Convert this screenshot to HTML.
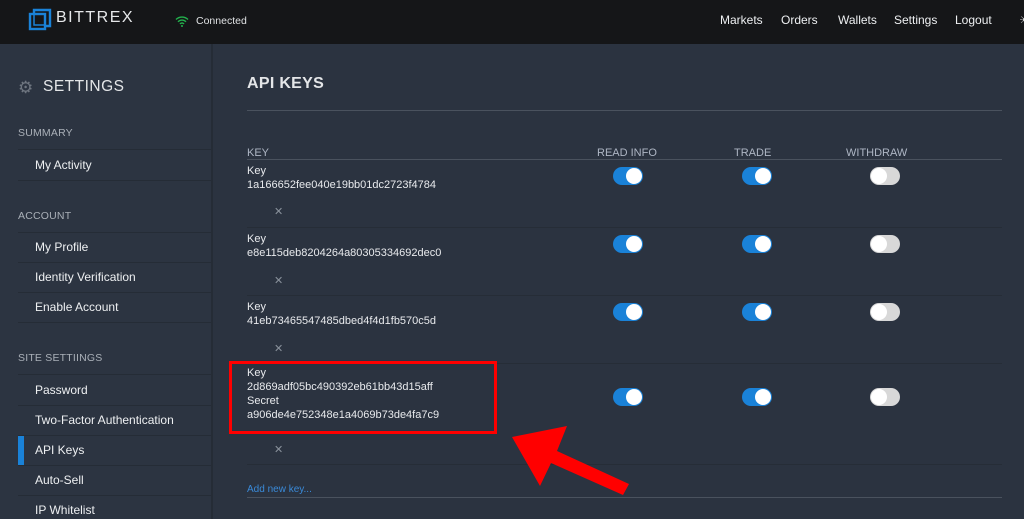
<!DOCTYPE html>
<html><head><meta charset="utf-8"><style>
*{margin:0;padding:0;box-sizing:border-box}
body{width:1024px;height:519px;overflow:hidden;background:#2b3340;font-family:"Liberation Sans",sans-serif;position:relative;color:#e8eaed}
.top{position:absolute;left:0;top:0;width:1024px;height:44px;background:#151618}
.abs{position:absolute;white-space:nowrap}
.side{position:absolute;left:0;top:44px;width:213px;height:475px;background:#2c3441;border-right:2px solid #252c36}
.sec{font-size:10.5px;color:#aab0b8;letter-spacing:.2px}
.item{font-size:12px;color:#eef0f2}
.hl{position:absolute;left:18px;width:195px;height:1px;background:#252c36}
.hdr{font-size:11px;color:#aeb6c4}
.tg{position:absolute;width:30px;height:18px;border-radius:9px;background:#1a82d8}
.tg::after{content:"";position:absolute;right:1px;top:1px;width:16px;height:16px;border-radius:50%;background:#fff}
.tg.off{background:#d8d8d8}
.tg.off::after{left:1px;right:auto}
.k{font-size:11px;color:#e8eaed;line-height:14px}
.x{font-size:11px;color:#8a929c}
.nav{font-size:12px;color:#eef0f2;top:13px}
</style></head><body>
<div class="top"></div>
<svg class="abs" style="left:28px;top:8px" width="24" height="24" viewBox="0 0 24 24"><rect x="2" y="6" width="15" height="15" fill="none" stroke="#1a82d8" stroke-width="2.4"/><path d="M6 6V2h16v16h-5" fill="none" stroke="#1a82d8" stroke-width="2.4"/><rect x="6" y="6" width="11" height="11" fill="none" stroke="#1a82d8" stroke-width="1.5"/></svg>
<div class="abs" style="left:56px;top:9px;font-size:16px;letter-spacing:1.5px;color:#e6e8ea">BITTREX</div>
<svg class="abs" style="left:175px;top:15px" width="14" height="12" viewBox="0 0 14 12"><path d="M1 4.5a8.5 8.5 0 0 1 12 0M3 6.8a5.5 5.5 0 0 1 8 0M5 9a2.5 2.5 0 0 1 4 0" fill="none" stroke="#22b14c" stroke-width="1.4"/><circle cx="7" cy="11" r="1" fill="#22b14c"/></svg>
<div class="abs" style="left:196px;top:15px;font-size:10.5px;color:#e0e2e4">Connected</div>
<div class="abs nav" style="left:720px">Markets</div>
<div class="abs nav" style="left:781px">Orders</div>
<div class="abs nav" style="left:838px">Wallets</div>
<div class="abs nav" style="left:894px">Settings</div>
<div class="abs nav" style="left:955px">Logout</div>
<div class="abs" style="left:1019px;top:13px;font-size:12px;color:#ccc">☀</div>

<div class="side"></div>
<div class="abs" style="left:18px;top:78px;font-size:17px;color:#6f7680">⚙</div>
<div class="abs" style="left:43px;top:78px;font-size:15.5px;letter-spacing:.5px;color:#e4e6e8">SETTINGS</div>
<div class="abs sec" style="left:18px;top:127px">SUMMARY</div>
<div class="hl" style="top:149px"></div>
<div class="abs item" style="left:35px;top:158px">My Activity</div>
<div class="hl" style="top:180px"></div>
<div class="abs sec" style="left:18px;top:210px">ACCOUNT</div>
<div class="hl" style="top:232px"></div>
<div class="abs item" style="left:35px;top:240px">My Profile</div>
<div class="hl" style="top:262px"></div>
<div class="abs item" style="left:35px;top:270px">Identity Verification</div>
<div class="hl" style="top:292px"></div>
<div class="abs item" style="left:35px;top:300px">Enable Account</div>
<div class="hl" style="top:322px"></div>
<div class="abs sec" style="left:18px;top:352px">SITE SETTIINGS</div>
<div class="hl" style="top:374px"></div>
<div class="abs item" style="left:35px;top:383px">Password</div>
<div class="hl" style="top:405px"></div>
<div class="abs item" style="left:35px;top:413px">Two-Factor Authentication</div>
<div class="hl" style="top:435px"></div>
<div class="abs" style="left:18px;top:436px;width:6px;height:30px;background:#1a82d8"></div>
<div class="abs item" style="left:35px;top:443px">API Keys</div>
<div class="hl" style="top:465px"></div>
<div class="abs item" style="left:35px;top:473px">Auto-Sell</div>
<div class="hl" style="top:495px"></div>
<div class="abs item" style="left:35px;top:503px">IP Whitelist</div>

<div class="abs" style="left:247px;top:75px;font-size:16px;font-weight:bold;letter-spacing:.3px;color:#e4e6e8">API KEYS</div>
<div class="abs" style="left:247px;top:110px;width:755px;height:1px;background:#4a525e"></div>
<div class="abs hdr" style="left:247px;top:147px">KEY</div>
<div class="abs hdr" style="left:597px;top:147px">READ INFO</div>
<div class="abs hdr" style="left:734px;top:147px">TRADE</div>
<div class="abs hdr" style="left:846px;top:147px">WITHDRAW</div>
<div class="abs" style="left:247px;top:159px;width:755px;height:1px;background:#4a525e"></div>

<div class="abs k" style="left:247px;top:164px">Key<br>1a166652fee040e19bb01dc2723f4784</div>
<div class="abs x" style="left:274px;top:205px">✕</div>
<div class="abs" style="left:247px;top:227px;width:755px;height:1px;background:#262d37"></div>
<div class="tg" style="left:613px;top:167px"></div><div class="tg" style="left:742px;top:167px"></div><div class="tg off" style="left:870px;top:167px"></div>

<div class="abs k" style="left:247px;top:232px">Key<br>e8e115deb8204264a80305334692dec0</div>
<div class="abs x" style="left:274px;top:274px">✕</div>
<div class="abs" style="left:247px;top:295px;width:755px;height:1px;background:#262d37"></div>
<div class="tg" style="left:613px;top:235px"></div><div class="tg" style="left:742px;top:235px"></div><div class="tg off" style="left:870px;top:235px"></div>

<div class="abs k" style="left:247px;top:300px">Key<br>41eb73465547485dbed4f4d1fb570c5d</div>
<div class="abs x" style="left:274px;top:342px">✕</div>
<div class="abs" style="left:247px;top:363px;width:755px;height:1px;background:#262d37"></div>
<div class="tg" style="left:613px;top:303px"></div><div class="tg" style="left:742px;top:303px"></div><div class="tg off" style="left:870px;top:303px"></div>

<div class="abs k" style="left:247px;top:366px">Key<br>2d869adf05bc490392eb61bb43d15aff<br>Secret<br>a906de4e752348e1a4069b73de4fa7c9</div>
<div class="abs x" style="left:274px;top:443px">✕</div>
<div class="tg" style="left:613px;top:388px"></div><div class="tg" style="left:742px;top:388px"></div><div class="tg off" style="left:870px;top:388px"></div>
<div class="abs" style="left:247px;top:464px;width:755px;height:1px;background:#262d37"></div>
<div class="abs" style="left:247px;top:484px;font-size:10px;color:#3a8ad8">Add new key...</div>
<div class="abs" style="left:247px;top:497px;width:755px;height:1px;background:#4a525e"></div>

<div class="abs" style="left:229px;top:361px;width:268px;height:73px;border:3px solid #f00"></div>
<svg class="abs" style="left:0;top:0" width="1024" height="519"><polygon points="512,437 567,426 557,451 629,484 623,495 551,463 540,486" fill="#f00"/></svg>
</body></html>
